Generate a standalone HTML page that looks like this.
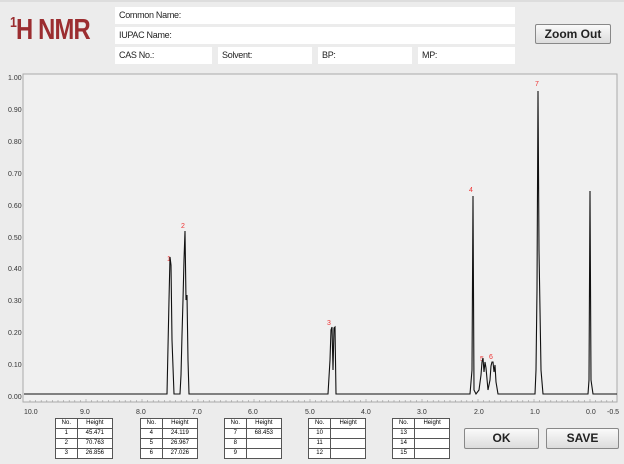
<!DOCTYPE html>
<html><head><style>
body{margin:0;width:624px;height:464px;background:#ececec;font-family:"Liberation Sans",sans-serif;position:relative;overflow:hidden}
.a{position:absolute}
.f{position:absolute;background:#fff;font-size:9px;color:#222;line-height:16px;padding-left:4px;box-sizing:border-box;letter-spacing:-0.3px}
.btn{position:absolute;background:linear-gradient(#fafafa,#dcdcdc);border:1px solid #888;border-radius:2px;font-weight:bold;font-size:12px;text-align:center;box-sizing:border-box;color:#222;transform-origin:center}
table{position:absolute;border-collapse:collapse;font-size:6px;background:#fff}
td{border:1px solid #555;height:9px;padding:0 2px;line-height:9px;text-align:center}
</style></head><body>
<div class="a" style="left:0;top:0;width:624px;height:2px;background:#ddd"></div>
<div class="a" style="left:10px;top:14px;font-size:29px;font-weight:bold;color:#9b2d30;letter-spacing:-1px;transform:scaleX(0.82);transform-origin:left"><sup style="font-size:15px;vertical-align:12px">1</sup>H NMR</div>
<div class="f" style="left:115px;top:7px;width:400px;height:17px">Common Name:</div>
<div class="f" style="left:115px;top:27px;width:400px;height:17px">IUPAC Name:</div>
<div class="f" style="left:115px;top:47px;width:97px;height:17px">CAS No.:</div>
<div class="f" style="left:218px;top:47px;width:94px;height:17px">Solvent:</div>
<div class="f" style="left:318px;top:47px;width:94px;height:17px">BP:</div>
<div class="f" style="left:418px;top:47px;width:97px;height:17px">MP:</div>
<div class="btn" style="left:535px;top:24px;width:76px;height:20px;line-height:18px">Zoom Out</div>
<svg class="a" style="left:0;top:0" width="624" height="464">
<rect x="23" y="74" width="594" height="328" fill="#f0f0f0" stroke="#aaa"/>
<path stroke="#999" stroke-width="0.6" d="M30 402v-2M35.6 402v-2M41.2 402v-2M46.8 402v-2M52.4 402v-2M58 402v-2M63.6 402v-2M69.2 402v-2M74.8 402v-2M80.4 402v-2M86 402v-3M91.6 402v-2M97.2 402v-2M102.8 402v-2M108.4 402v-2M114 402v-2M119.6 402v-2M125.2 402v-2M130.8 402v-2M136.4 402v-2M142 402v-3M147.6 402v-2M153.2 402v-2M158.8 402v-2M164.4 402v-2M170 402v-2M175.6 402v-2M181.2 402v-2M186.8 402v-2M192.4 402v-2M198 402v-3M203.6 402v-2M209.2 402v-2M214.8 402v-2M220.4 402v-2M226 402v-2M231.6 402v-2M237.2 402v-2M242.8 402v-2M248.4 402v-2M254 402v-3M259.6 402v-2M265.2 402v-2M270.8 402v-2M276.4 402v-2M282 402v-2M287.6 402v-2M293.2 402v-2M298.8 402v-2M304.4 402v-2M310 402v-3M315.6 402v-2M321.2 402v-2M326.8 402v-2M332.4 402v-2M338 402v-2M343.6 402v-2M349.2 402v-2M354.8 402v-2M360.4 402v-2M366 402v-3M371.6 402v-2M377.2 402v-2M382.8 402v-2M388.4 402v-2M394 402v-2M399.6 402v-2M405.2 402v-2M410.8 402v-2M416.4 402v-2M422 402v-3M427.6 402v-2M433.2 402v-2M438.8 402v-2M444.4 402v-2M450 402v-2M455.6 402v-2M461.2 402v-2M466.8 402v-2M472.4 402v-2M478 402v-3M483.6 402v-2M489.2 402v-2M494.8 402v-2M500.4 402v-2M506 402v-2M511.6 402v-2M517.2 402v-2M522.8 402v-2M528.4 402v-2M534 402v-3M539.6 402v-2M545.2 402v-2M550.8 402v-2M556.4 402v-2M562 402v-2M567.6 402v-2M573.2 402v-2M578.8 402v-2M584.4 402v-2M590 402v-3M595.6 402v-2M601.2 402v-2M606.8 402v-2M612.4 402v-2"/>
<g font-size="7" fill="#333" font-family="Liberation Sans">
<text x="8" y="80">1.00</text><text x="8" y="112">0.90</text><text x="8" y="144">0.80</text><text x="8" y="176">0.70</text><text x="8" y="208">0.60</text><text x="8" y="240">0.50</text><text x="8" y="271">0.40</text><text x="8" y="303">0.30</text><text x="8" y="335">0.20</text><text x="8" y="367">0.10</text><text x="8" y="399">0.00</text>
<text x="24" y="414">10.0</text><text x="80" y="414">9.0</text><text x="136" y="414">8.0</text><text x="192" y="414">7.0</text><text x="248" y="414">6.0</text><text x="305" y="414">5.0</text><text x="361" y="414">4.0</text><text x="417" y="414">3.0</text><text x="474" y="414">2.0</text><text x="530" y="414">1.0</text><text x="586" y="414">0.0</text><text x="607" y="414">-0.5</text>
</g>
<g fill="#e33" font-size="7" font-family="Liberation Sans">
<text x="167" y="261">1</text><text x="181" y="228">2</text><text x="327" y="325">3</text><text x="469" y="192">4</text><text x="480" y="361">5</text><text x="489" y="359">6</text><text x="535" y="86">7</text>
</g>
<path fill="none" stroke="#111" stroke-width="1.1" d="M24 394 L167 394 L169 300 L170 257 L171 265 L172 340 L174 394 L180 394 L181 375 L182 335 L183 300 L184 260 L185 231 L186 300 L187 295 L188 360 L189 394 L328 394 L330 360 L331 330 L332 327 L333 370 L334 328 L335 327 L336 394 L470 394 L472 370 L473 196 L474 390 L476 394 L479 390 L481 375 L482 362 L483 358 L484 372 L485 362 L486 368 L488 390 L490 380 L491 366 L492 362 L493 362 L494 372 L495 365 L496 382 L498 394 L535 394 L536 370 L537 290 L538 91 L539 250 L540 310 L541 370 L543 394 L588 394 L589 380 L590 191 L591 380 L593 394 L617 394"/>
</svg>
<table style="left:55px;top:418px;width:58px"><tr><td>No.</td><td>Height</td></tr><tr><td>1</td><td>45.471</td></tr><tr><td>2</td><td>70.763</td></tr><tr><td>3</td><td>26.856</td></tr></table>
<table style="left:140px;top:418px;width:58px"><tr><td>No.</td><td>Height</td></tr><tr><td>4</td><td>24.119</td></tr><tr><td>5</td><td>26.967</td></tr><tr><td>6</td><td>27.026</td></tr></table>
<table style="left:224px;top:418px;width:58px"><tr><td>No.</td><td>Height</td></tr><tr><td>7</td><td>68.453</td></tr><tr><td>8</td><td></td></tr><tr><td>9</td><td></td></tr></table>
<table style="left:308px;top:418px;width:58px"><tr><td>No.</td><td>Height</td></tr><tr><td>10</td><td></td></tr><tr><td>11</td><td></td></tr><tr><td>12</td><td></td></tr></table>
<table style="left:392px;top:418px;width:58px"><tr><td>No.</td><td>Height</td></tr><tr><td>13</td><td></td></tr><tr><td>14</td><td></td></tr><tr><td>15</td><td></td></tr></table>
<div class="btn" style="left:464px;top:428px;width:75px;height:21px;line-height:19px">OK</div>
<div class="btn" style="left:546px;top:428px;width:73px;height:21px;line-height:19px">SAVE</div>
</body></html>
